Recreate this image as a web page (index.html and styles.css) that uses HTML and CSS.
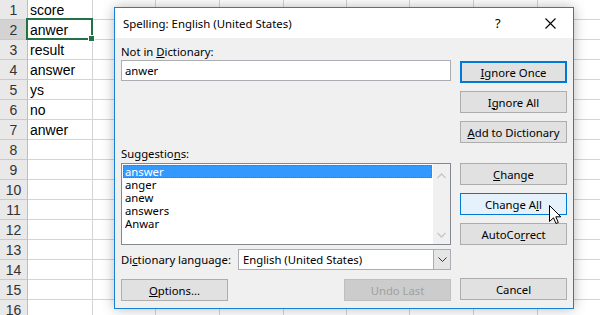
FILE: index.html
```html
<!DOCTYPE html>
<html>
<head>
	<title>Spelling</title>
	<link rel="stylesheet" href="styles.css">
</head>
<body>
	<table class="sheet">
		<tr><th>1</th><td>score</td><td></td><td></td><td></td><td></td><td></td><td></td><td></td><td></td></tr>
		<tr><th class="sel">2</th><td class="active">anwer</td><td></td><td></td><td></td><td></td><td></td><td></td><td></td><td></td></tr>
		<tr><th>3</th><td>result</td><td></td><td></td><td></td><td></td><td></td><td></td><td></td><td></td></tr>
		<tr><th>4</th><td>answer</td><td></td><td></td><td></td><td></td><td></td><td></td><td></td><td></td></tr>
		<tr><th>5</th><td>ys</td><td></td><td></td><td></td><td></td><td></td><td></td><td></td><td></td></tr>
		<tr><th>6</th><td>no</td><td></td><td></td><td></td><td></td><td></td><td></td><td></td><td></td></tr>
		<tr><th>7</th><td>anwer</td><td></td><td></td><td></td><td></td><td></td><td></td><td></td><td></td></tr>
		<tr><th>8</th><td></td><td></td><td></td><td></td><td></td><td></td><td></td><td></td><td></td></tr>
		<tr><th>9</th><td></td><td></td><td></td><td></td><td></td><td></td><td></td><td></td><td></td></tr>
		<tr><th>10</th><td></td><td></td><td></td><td></td><td></td><td></td><td></td><td></td><td></td></tr>
		<tr><th>11</th><td></td><td></td><td></td><td></td><td></td><td></td><td></td><td></td><td></td></tr>
		<tr><th>12</th><td></td><td></td><td></td><td></td><td></td><td></td><td></td><td></td><td></td></tr>
		<tr><th>13</th><td></td><td></td><td></td><td></td><td></td><td></td><td></td><td></td><td></td></tr>
		<tr><th>14</th><td></td><td></td><td></td><td></td><td></td><td></td><td></td><td></td><td></td></tr>
		<tr><th>15</th><td></td><td></td><td></td><td></td><td></td><td></td><td></td><td></td><td></td></tr>
		<tr><th>16</th><td></td><td></td><td></td><td></td><td></td><td></td><td></td><td></td><td></td></tr>
	</table>

	<div class="dialog">
		<div class="titlebar">
			<span class="title">Spelling: English (United States)</span>
			<span class="help">?</span>
			<span class="close">
				<svg width="11" height="11" viewBox="0 0 11 11"><path d="M0.5 0.5 L10.5 10.5 M10.5 0.5 L0.5 10.5" stroke="#000" stroke-width="1.1" fill="none"/></svg>
			</span>
		</div>
		<div class="dlg-body">
			<div class="left">
				<div class="lbl first">Not in <u>D</u>ictionary:</div>
				<div class="textbox">anwer</div>
				<div class="lbl sugg">Suggestio<u>n</u>s:</div>
				<div class="listbox">
					<ul class="items">
						<li class="picked">answer</li>
						<li>anger</li>
						<li>anew</li>
						<li>answers</li>
						<li>Anwar</li>
					</ul>
					<div class="scroll">
						<svg width="9" height="6" viewBox="0 0 9 6"><path d="M0.5 5 L4.5 1 L8.5 5" stroke="#c6c6c6" stroke-width="1.3" fill="none"/></svg>
						<svg width="9" height="6" viewBox="0 0 9 6"><path d="M0.5 1 L4.5 5 L8.5 1" stroke="#c6c6c6" stroke-width="1.3" fill="none"/></svg>
					</div>
				</div>
				<div class="lang-row">
					<span>Di<u>c</u>tionary language:</span>
					<div class="combo">
						<span class="combo-text">English (United States)</span>
						<span class="drop">
							<svg width="9" height="5" viewBox="0 0 9 5"><path d="M0.5 0.5 L4.5 4.5 L8.5 0.5" stroke="#333" stroke-width="1" fill="none"/></svg>
						</span>
					</div>
				</div>
				<div class="bottom-row">
					<button class="btn"><u>O</u>ptions...</button>
					<button class="btn" disabled>Undo Last</button>
				</div>
			</div>
			<div class="right">
				<button class="btn default"><u>I</u>gnore Once</button>
				<button class="btn">I<u>g</u>nore All</button>
				<button class="btn"><u>A</u>dd to Dictionary</button>
				<button class="btn group"><u>C</u>hange</button>
				<button class="btn hover">Change A<u>l</u>l</button>
				<button class="btn">AutoCo<u>r</u>rect</button>
				<button class="btn cancel">Cancel</button>
			</div>
		</div>
	</div>

	<svg class="cursor" width="13" height="20" viewBox="0 0 13 20">
		<path d="M0.5 0.5 L0.5 16.5 L4.5 12.8 L7 18.5 L9.3 17.5 L6.8 11.8 L11.8 11.8 Z" fill="#fff" stroke="#000" stroke-width="1"/>
	</svg>
</body>
</html>
```
FILE: styles.css
```css
body {
	margin: 0;
	width: 600px;
	height: 315px;
	overflow: hidden;
	position: relative;
	background-color: #fff;
	font-family: "Liberation Sans", Arial, sans-serif;
}

/* worksheet */

.sheet {
	border-collapse: separate;
	border-spacing: 0;
	table-layout: fixed;
}

.sheet th,
.sheet td {
	height: 20px;
	padding: 0;
	box-sizing: border-box;
	border-right: 1px solid #d4d4d4;
	border-bottom: 1px solid #d4d4d4;
	font-size: 14px;
	font-weight: normal;
	white-space: nowrap;
}

.sheet th {
	width: 28px;
	min-width: 28px;
	background-color: #e9e9e9;
	border-right-color: #bdbdbd;
	border-bottom-color: #c9c9c9;
	color: #333;
	text-align: center;
}

.sheet th.sel {
	background-color: #d3d3d3;
}

.sheet td {
	min-width: 64px;
	width: 64px;
	padding-left: 2px;
	color: #000;
}

.sheet td:nth-child(2) { width: 65px; min-width: 65px; }
.sheet td:nth-child(3),
.sheet td:nth-child(6),
.sheet td:nth-child(7) { width: 63px; min-width: 63px; }

.sheet td.active {
	position: relative;
}

.sheet td.active::after {
	content: "";
	position: absolute;
	left: -2px;
	top: -2px;
	right: -1px;
	bottom: -1px;
	border: 2px solid #217346;
}

.sheet td.active::before {
	content: "";
	position: absolute;
	right: -3px;
	bottom: -3px;
	width: 5px;
	height: 5px;
	background-color: #217346;
	border: 1px solid #fff;
	z-index: 1;
}

/* dialog */

.dialog {
	position: absolute;
	left: 114px;
	top: 7px;
	width: 460px;
	height: 302px;
	box-sizing: border-box;
	border: 1px solid #1a7fd6;
	background-color: #f0f0f0;
	box-shadow: 0 0 12px rgba(0, 0, 0, 0.28);
	font-family: "Noto Sans", sans-serif;
	font-size: 11.3px;
	color: #000;
}

.titlebar {
	height: 30px;
	background-color: #fff;
	display: flex;
	align-items: center;
	padding-left: 8px;
}

.title {
	flex: 1;
	font-size: 11.4px;
}

.help {
	width: 20px;
	font-size: 13px;
	margin-right: 30px;
}

.close {
	display: flex;
	margin-right: 17px;
}

.dlg-body {
	display: flex;
	gap: 9px;
	padding: 0 6px 0 6px;
}

.left {
	width: 330px;
	display: flex;
	flex-direction: column;
}

.lbl {
	line-height: 16px;
}

.lbl.first {
	margin-top: 6px;
}

.lbl.sugg {
	margin-top: 65px;
}

.textbox {
	height: 21px;
	box-sizing: border-box;
	border: 1px solid #abadb3;
	background-color: #fff;
	padding-left: 3px;
	line-height: 19px;
}

.listbox {
	height: 82px;
	box-sizing: border-box;
	margin-top: 1px;
	border: 1px solid #828790;
	background-color: #fff;
	display: flex;
}

.items {
	flex: 1;
	list-style: none;
	margin: 0;
	padding: 1px 1px 0 1px;
}

.items li {
	height: 13px;
	line-height: 13px;
	padding-left: 2px;
}

.items li.picked {
	background-color: #3399ff;
	color: #fff;
	outline: 1px dotted #a0622d;
	outline-offset: -1px;
}

.scroll {
	width: 17px;
	background-color: #f0f0f0;
	display: flex;
	flex-direction: column;
	align-items: center;
	justify-content: space-between;
	padding: 9px 0 6px;
	box-sizing: border-box;
}

.lang-row {
	margin-top: 4px;
	display: flex;
	align-items: center;
	justify-content: space-between;
}

.combo {
	width: 213px;
	height: 21px;
	box-sizing: border-box;
	border: 1px solid #abadb3;
	background-color: #fff;
	display: flex;
}

.combo-text {
	flex: 1;
	padding-left: 4px;
	line-height: 19px;
}

.drop {
	width: 16px;
	background-color: #e5e5e5;
	border-left: 1px solid #acacac;
	display: flex;
	align-items: center;
	justify-content: center;
}

.bottom-row {
	margin-top: 9px;
	display: flex;
	justify-content: space-between;
}

.right {
	width: 107px;
	display: flex;
	flex-direction: column;
	gap: 8px;
	padding-top: 23px;
}

.btn {
	width: 107px;
	height: 22px;
	box-sizing: border-box;
	border: 1px solid #adadad;
	background-color: #e1e1e1;
	font-family: "Noto Sans", sans-serif;
	font-size: 11.3px;
	color: #000;
	padding: 0;
}

.btn.default {
	border: 2px solid #0078d7;
}

.btn.hover {
	background-color: #e5f1fb;
	border-color: #0078d7;
}

.btn.group {
	margin-top: 12px;
}

.btn.cancel {
	margin-top: 25px;
}

.btn:disabled {
	background-color: #cccccc;
	border-color: #bfbfbf;
	color: #a0a0a0;
}

.cursor {
	position: absolute;
	left: 549px;
	top: 205px;
}
```
